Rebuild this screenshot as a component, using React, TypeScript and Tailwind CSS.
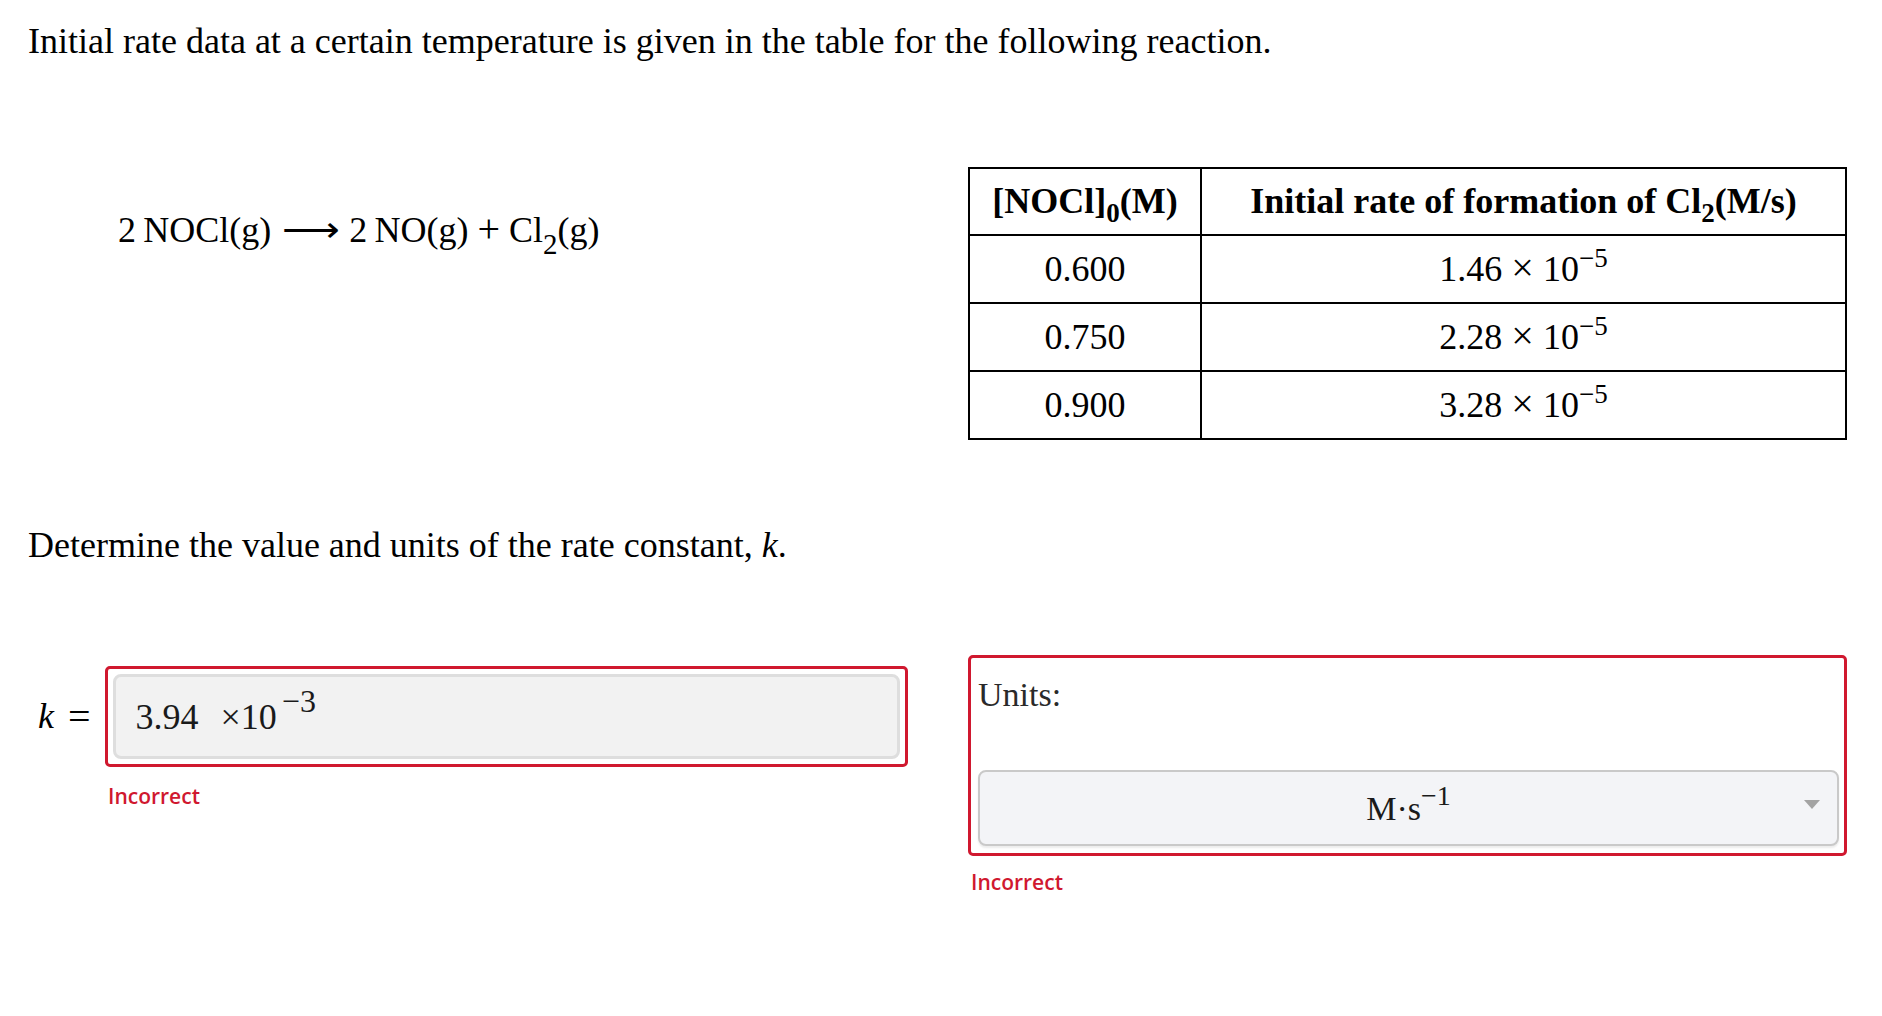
const rows = [
  { conc: '0.600', rate: '1.46' },
  { conc: '0.750', rate: '2.28' },
  { conc: '0.900', rate: '3.28' },
];

function Incorrect({ className }: { className: string }) {
  return (
    <p className={`font-['Open_Sans',sans-serif] font-semibold text-[21px] leading-[27px] text-[#d0182f] ${className}`}>
      Incorrect
    </p>
  );
}

export default function App() {
  return (
    <div className="min-h-screen bg-white text-black font-['Liberation_Serif','Times_New_Roman',serif] pl-[28px] pr-[35px] pt-[20px]">
      <p className="text-[36px] leading-[43px]">
        Initial rate data at a certain temperature is given in the table for the following reaction.
      </p>

      {/* Reaction + data table */}
      <div className="mt-[104px] flex justify-between items-start">
        <div className="pt-[40px] pl-[90px] text-[36px] leading-[43px] whitespace-nowrap flex items-baseline">
          <span>2&#8201;NOCl(g)</span>
          <span className="ml-[14px] mr-[12px] inline-block scale-x-[1.12]">⟶</span>
          <span>2&#8201;NO(g)</span>
          <span className="mx-[9px] text-[40px] leading-[43px]">+</span>
          <span>
            Cl<sub className="-bottom-[0.4em] text-[29px]">2</sub>(g)
          </span>
        </div>
        <table className="w-[879px] table-fixed border-collapse border-2 border-black text-[36px] leading-[43px]">
          <colgroup>
            <col className="w-[232px]" />
            <col />
          </colgroup>
          <thead>
            <tr className="h-[67px]">
              <th className="border-2 border-black font-bold text-center">
                [NOCl]<sub className="-bottom-[0.35em]">0</sub>(M)
              </th>
              <th className="border-2 border-black font-bold text-center">
                Initial rate of formation of Cl<sub className="-bottom-[0.35em]">2</sub>(M/s)
              </th>
            </tr>
          </thead>
          <tbody>
            {rows.map((r) => (
              <tr key={r.conc} className="h-[68px]">
                <td className="border-2 border-black text-center">{r.conc}</td>
                <td className="border-2 border-black text-center">
                  {r.rate} <span className="text-[40px] leading-[36px]">×</span> 10<sup>−5</sup>
                </td>
              </tr>
            ))}
          </tbody>
        </table>
      </div>

      <p className="mt-[84px] text-[36px] leading-[43px]">
        Determine the value and units of the rate constant, <i>k</i>.
      </p>

      {/* Answer row */}
      <div className="mt-[88px] flex justify-between items-start">
        <div className="pt-[11px]">
          <div className="flex items-center">
            <div className="pl-[10px] mr-[14px] flex items-center gap-[14px] text-[36px] leading-[43px]">
              <i>k</i>
              <span className="text-[40px]">=</span>
            </div>
            <div className="w-[803px] h-[101px] border-[3px] border-[#d0182f] rounded-[5px] p-[5px]">
              <div className="h-full bg-[#f2f2f2] border-[3px] border-[#dedede] rounded-[8px] flex items-center pl-[20px] text-[36px] text-[#1a1a1a]">
                <span>3.94</span>
                <span className="ml-[22px]">×10</span>
                <span className="relative -top-[16px] ml-[5px] text-[32px]">−3</span>
              </div>
            </div>
          </div>
          <Incorrect className="pl-[80px] mt-[16px]" />
        </div>

        <div className="w-[879px]">
          <div className="border-[3px] border-[#d0182f] rounded-[5px] pl-[7px] pr-[5px] pt-[16px] pb-[7px]">
            <p className="text-[34px] leading-[41px] text-[#2a2a2a]">Units:</p>
            <div className="relative mt-[55px] h-[76px] border-2 border-[#c9c9c9] bg-[#f3f4f7] rounded-[8px] shadow-[0_2px_2px_rgba(0,0,0,0.08)] flex items-center justify-center text-[34px] text-[#1a1a1a]">
              <span>
                M·s<span className="relative -top-[15px] text-[28px]">−1</span>
              </span>
              <span className="absolute right-[17px] top-[28px] w-0 h-0 border-x-[8px] border-x-transparent border-t-[9px] border-t-[#a3a3a3]" />
            </div>
          </div>
          <Incorrect className="pl-[3px] mt-[13px]" />
        </div>
      </div>
    </div>
  );
}
